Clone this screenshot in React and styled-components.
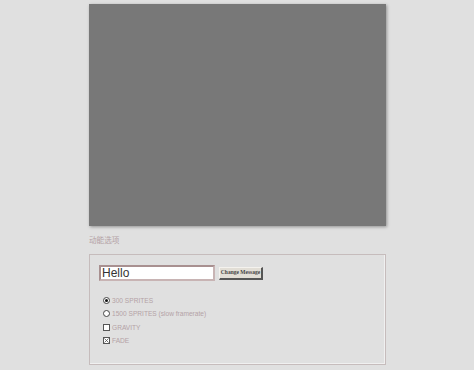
import React from "react";
import styled, { createGlobalStyle } from "styled-components";

const Global = createGlobalStyle`
  html, body { margin: 0; padding: 0; background: #e0e0e0; }
  body { font-family: "Liberation Sans", Arial, sans-serif; }
`;

const Page = styled.div`
  width: 297px;
  margin-left: 89px;
  padding-top: 4px;
  display: flex;
  flex-direction: column;
`;

const Canvas = styled.div`
  width: 297px;
  height: 222px;
  background: #787878;
  box-shadow: 1px 1px 3px rgba(0, 0, 0, 0.35);
`;

const Caption = styled.div`
  margin-top: 8px;
  height: 12px;
  font-size: 7.6px;
  line-height: 12px;
  color: #b4a2a6;
  font-family: "Noto Sans CJK SC", sans-serif;
`;

const Panel = styled.div`
  margin-top: 8px;
  box-sizing: border-box;
  height: 111px;
  border: 1px solid #c6bcbc;
  box-shadow: inset -1px -1px 0 #f0f0f0;
  padding: 10px 0 0 9px;
  display: flex;
  flex-direction: column;
`;

const MessageRow = styled.div`
  display: flex;
  align-items: center;
  gap: 4px;
`;

const TextInput = styled.div`
  box-sizing: border-box;
  width: 116px;
  height: 16px;
  background: #fff;
  border: 2px solid #a89090;
  border-right-color: #c8b4b4;
  border-bottom-color: #c8b4b4;
  font-size: 12px;
  line-height: 12px;
  padding-left: 1px;
  color: #333;
`;

const Button = styled.div`
  box-sizing: border-box;
  width: 44px;
  height: 13px;
  margin-top: 1px;
  background: #e2ded6;
  border: 1px solid #f4f2ee;
  border-right: 2px solid #555;
  border-bottom: 2px solid #555;
  font-family: "Liberation Serif", serif;
  font-size: 5.5px;
  font-weight: bold;
  line-height: 9px;
  text-align: center;
  white-space: nowrap;
  color: #444;
`;

const Options = styled.div`
  margin-top: 14px;
  padding-left: 4px;
  display: flex;
  flex-direction: column;
  gap: 3.5px;
`;

const Option = styled.div`
  display: flex;
  align-items: center;
  gap: 2px;
  height: 10px;
  font-size: 6.6px;
  color: #b4a2a6;
`;

const Radio = styled.span`
  box-sizing: border-box;
  width: 7px;
  height: 7px;
  border-radius: 50%;
  border: 1px solid #444;
  background: #fff;
  display: flex;
  align-items: center;
  justify-content: center;
  &::after {
    content: "";
    width: 3px;
    height: 3px;
    border-radius: 50%;
    background: ${(p) => (p.checked ? "#111" : "transparent")};
  }
`;

const Check = styled.span`
  box-sizing: border-box;
  width: 7px;
  height: 7px;
  border: 1px solid #555;
  background: #fff;
  display: flex;
`;

export default function App() {
  return (
    <>
      <Global />
      <Page>
        <Canvas />
        <Caption>动能选项</Caption>
        <Panel>
          <MessageRow>
            <TextInput>Hello</TextInput>
            <Button>Change Message</Button>
          </MessageRow>
          <Options>
            <Option>
              <Radio checked />
              300 SPRITES
            </Option>
            <Option>
              <Radio />
              1500 SPRITES (slow framerate)
            </Option>
            <Option>
              <Check />
              GRAVITY
            </Option>
            <Option>
              <Check>
                <svg width="5" height="5" viewBox="0 0 5 5">
                  <path d="M0.5 0.5L4.5 4.5M4.5 0.5L0.5 4.5" stroke="#555" strokeWidth="0.8" />
                </svg>
              </Check>
              FADE
            </Option>
          </Options>
        </Panel>
      </Page>
    </>
  );
}
